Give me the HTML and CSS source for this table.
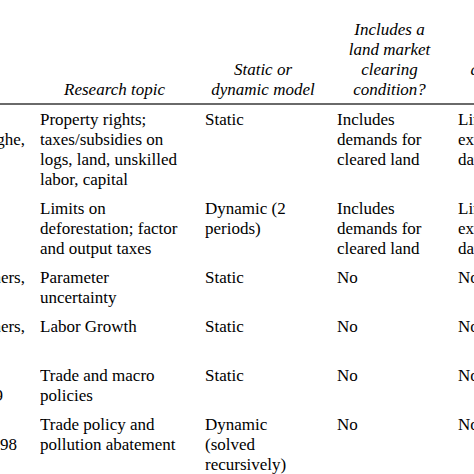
FILE: index.html
```html
<!DOCTYPE html>
<html lang="en">
<head>
<meta charset="utf-8">
<title>CGE models of deforestation</title>
<link rel="stylesheet" href="styles.css">
</head>
<body>
<table class="studies">
  <colgroup>
    <col class="c-study">
    <col class="c-topic">
    <col class="c-model">
    <col class="c-market">
    <col class="c-data">
  </colgroup>
  <thead>
    <tr>
      <th class="study"><span class="ln hide">Study</span></th>
      <th>Research topic</th>
      <th>Static or<br>dynamic model</th>
      <th>Includes a<br>land market<br>clearing<br>condition?</th>
      <th>Treatment of<br>land<br>supply;<br>availability of<br>data</th>
    </tr>
  </thead>
  <tbody>
    <tr>
      <td class="study"><span class="ln hide">Persson and</span><span class="ln">Munasinghe,</span><span class="ln hide">1995</span></td>
      <td>Property rights;<br>taxes/subsidies on<br>logs, land, unskilled<br>labor, capital</td>
      <td>Static</td>
      <td>Includes<br>demands for<br>cleared land</td>
      <td>Limited<br>extent of<br>data</td>
    </tr>
    <tr>
      <td class="study"><span class="ln hide">Wiebelt,</span><span class="ln hide">1994</span></td>
      <td>Limits on<br>deforestation; factor<br>and output taxes</td>
      <td>Dynamic (2<br>periods)</td>
      <td>Includes<br>demands for<br>cleared land</td>
      <td>Limited<br>extent of<br>data</td>
    </tr>
    <tr>
      <td class="study"><span class="ln">Abler and others,</span><span class="ln hide">1999a</span></td>
      <td>Parameter<br>uncertainty</td>
      <td>Static</td>
      <td>No</td>
      <td>No</td>
    </tr>
    <tr>
      <td class="study"><span class="ln">Abler and others,</span><span class="ln hide">1998</span></td>
      <td>Labor Growth</td>
      <td>Static</td>
      <td>No</td>
      <td>No</td>
    </tr>
    <tr>
      <td class="study"><span class="ln hide">Cattaneo,</span><span class="ln end3">1999</span></td>
      <td>Trade and macro<br>policies</td>
      <td>Static</td>
      <td>No</td>
      <td>No</td>
    </tr>
    <tr>
      <td class="study"><span class="ln hide">Bussolo,</span><span class="ln end17">1998</span></td>
      <td>Trade policy and<br>pollution abatement</td>
      <td>Dynamic<br>(solved<br>recursively)</td>
      <td>No</td>
      <td>No</td>
    </tr>
  </tbody>
</table>
</body>
</html>
```

FILE: styles.css
```css
html, body {
  margin: 0;
  padding: 0;
  background: #ffffff;
  overflow: hidden;
}

body {
  width: 474px;
  height: 474px;
  font-family: "Liberation Serif", "Times New Roman", serif;
  font-size: 17px;
  line-height: 20px;
  color: #000000;
}

.studies {
  margin-left: -200px;
  width: 794px;
  table-layout: fixed;
  border-collapse: collapse;
  border-spacing: 0;
}

.c-study { width: 240px; }
.c-topic { width: 165px; }
.c-model { width: 132px; }
.c-market { width: 121px; }
.c-data { width: 136px; }

.studies th,
.studies td {
  padding: 0 16px 0 0;
  white-space: nowrap;
  overflow: hidden;
}

.studies th {
  font-style: italic;
  font-weight: normal;
  text-align: center;
  vertical-align: bottom;
  padding-bottom: 3px;
  border-bottom: 2px solid #6a6a6a;
}

.studies td {
  text-align: left;
  vertical-align: top;
  padding-top: 5px;
  padding-bottom: 4px;
}

.studies .study {
  text-align: right;
  padding-right: 15px;
}

.ln {
  display: block;
}

.ln.hide {
  padding-right: 70px;
}

.ln.end3 {
  padding-right: 22px;
}

.ln.end17 {
  padding-right: 8px;
}
```
